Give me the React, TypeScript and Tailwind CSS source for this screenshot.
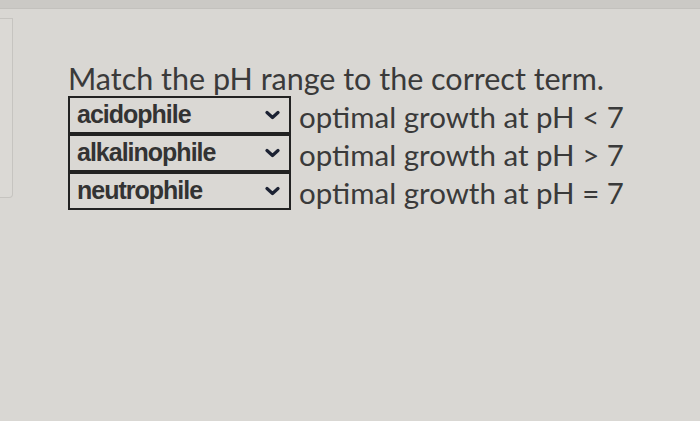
const rows = [
  { term: "acidophile", desc: "optimal growth at pH < 7" },
  { term: "alkalinophile", desc: "optimal growth at pH > 7" },
  { term: "neutrophile", desc: "optimal growth at pH = 7" },
];

const Chevron = () => (
  <svg width="15" height="10" viewBox="0 0 15 10" className="shrink-0">
    <path d="M2 2.5 L7.5 7.5 L13 2.5" fill="none" stroke="#1c2233" strokeWidth="3.2" strokeLinecap="round" strokeLinejoin="round" />
  </svg>
);

export default function App() {
  return (
    <div className="w-[700px] h-[421px] overflow-hidden bg-[#d9d7d3] flex flex-col">
      <div className="h-[9px] bg-[#cbc9c5] border-b border-[#c3c1bd]" />
      <div className="flex flex-1">
        {/* side panel peeking in from the left */}
        <div className="w-[13px] h-[180px] mt-[9px] border border-l-0 border-[#c6c4c0] rounded-br-[4px] bg-[#dbd9d5]" />
        <div className="ml-[55px] mt-[54px] text-[#3a3a3a]" style={{ fontFamily: 'Lato, "Noto Sans", sans-serif' }}>
          <h1 className="text-[30.5px] leading-[30px]">Match the pH range to the correct term.</h1>
          <div className="mt-[3px] flex flex-col">
            {rows.map(row => (
              <div key={row.term} className="flex items-center">
                <div className="w-[223px] h-[38px] border-2 border-[#222] flex items-center justify-between pl-[7px] pr-[9px] bg-[#dad8d4]">
                  <span
                    className="text-[25px] font-bold text-[#333] tracking-[-1px]"
                    style={{ fontFamily: '"Liberation Sans", Arial, sans-serif' }}>
                    {row.term}
                  </span>
                  <Chevron />
                </div>
                <span className="ml-[8px] pt-[3px] text-[29.5px] leading-none text-[#3a3a3a]">{row.desc}</span>
              </div>
            ))}
          </div>
        </div>
      </div>
    </div>
  );
}
